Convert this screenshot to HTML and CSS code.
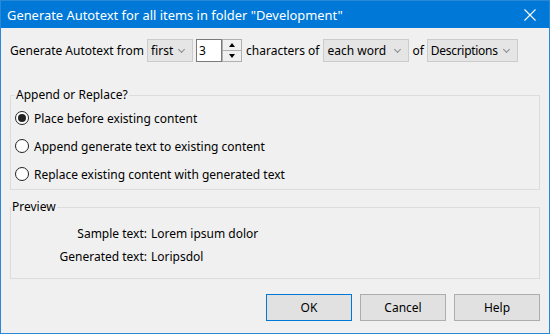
FILE: index.html
```html
<!DOCTYPE html>
<html lang="en">
<head>
    <meta charset="UTF-8">
    <title>Generate Autotext</title>
    <link rel="stylesheet" href="styles.css">
</head>
<body>
    <div class="window">
        <div class="titlebar">
            <span class="title">Generate Autotext for all items in folder "Development"</span>
            <svg class="close" width="12" height="12" viewBox="0 0 12 12">
                <path d="M0.5 0.5 L11.5 11.5 M11.5 0.5 L0.5 11.5" stroke="#fff" stroke-width="1.1" fill="none"/>
            </svg>
        </div>

        <div class="content">
            <div class="gen-row">
                <span class="lbl-from">Generate Autotext from</span>
                <div class="combo combo-first">first<span class="chev"></span></div>
                <div class="spin">
                    <div class="spin-input">3</div>
                    <div class="spin-btns">
                        <div class="spin-btn up"><span class="tri-up"></span></div>
                        <div class="spin-btn down"><span class="tri-down"></span></div>
                    </div>
                </div>
                <span class="lbl-chars">characters of</span>
                <div class="combo combo-word">each word<span class="chev"></span></div>
                <span class="lbl-of">of</span>
                <div class="combo combo-desc">Descriptions<span class="chev"></span></div>
            </div>

            <fieldset class="group group-mode">
                <legend>Append or Replace?</legend>
                <label class="radio-row"><span class="radio checked"></span>Place before existing content</label>
                <label class="radio-row"><span class="radio"></span>Append generate text to existing content</label>
                <label class="radio-row"><span class="radio"></span>Replace existing content with generated text</label>
            </fieldset>

            <fieldset class="group group-preview">
                <legend>Preview</legend>
                <div class="preview-grid">
                    <span class="pv-label">Sample text:</span>
                    <span class="pv-value">Lorem ipsum dolor</span>
                    <span class="pv-label">Generated text:</span>
                    <span class="pv-value">Loripsdol</span>
                </div>
            </fieldset>

            <div class="buttons">
                <button class="btn default">OK</button>
                <button class="btn">Cancel</button>
                <button class="btn">Help</button>
            </div>
        </div>
    </div>
</body>
</html>
```

FILE: styles.css
```css
body {
    margin: 0;
    font-family: "Noto Sans", "Open Sans", sans-serif;
    font-size: 12px;
    color: #000;
}
.window {
    width: 550px;
    height: 334px;
    box-sizing: border-box;
    border: 1px solid #2b88d8;
    background: #f0f0f0;
    display: flex;
    flex-direction: column;
}
.titlebar {
    height: 27px;
    background: #0078d7;
    color: #fff;
    display: flex;
    align-items: center;
    justify-content: space-between;
    padding: 0 13px 0 6px;
    flex-shrink: 0;
}
.title {
    font-size: 12.9px;
    white-space: nowrap;
}
.content {
    padding: 11px 9px 0 9px;
}
.gen-row {
    display: flex;
    align-items: center;
    height: 23px;
    white-space: nowrap;
}
.gen-row > * {
    flex-shrink: 0;
}
.lbl-from {
    margin-right: 3px;
}
.combo {
    position: relative;
    height: 23px;
    box-sizing: border-box;
    border: 1px solid #cccccc;
    background: #e5e5e5;
    padding: 0 0 0 3px;
    line-height: 21px;
}
.chev {
    position: absolute;
    right: 8px;
    top: 7px;
    width: 4px;
    height: 4px;
    border-right: 1px solid #8a8a8a;
    border-bottom: 1px solid #8a8a8a;
    transform: rotate(45deg);
}
.combo-first { width: 46px; }
.combo-word { width: 86px; }
.combo-desc {
    width: 91px;
    letter-spacing: -0.3px;
}
.spin {
    display: flex;
    margin-left: 3px;
    height: 23px;
}
.spin-input {
    width: 26px;
    box-sizing: border-box;
    border: 1px solid #7a7a7a;
    background: #fff;
    padding-left: 2px;
    line-height: 21px;
}
.spin-btns {
    display: flex;
    flex-direction: column;
    width: 20px;
}
.spin-btn {
    flex: 1;
    border: 1px solid #b0b0b0;
    background: #f0f0f0;
    display: flex;
    align-items: center;
    justify-content: center;
}
.spin-btn.down {
    border-top: none;
}
.tri-up {
    border-left: 3px solid transparent;
    border-right: 3px solid transparent;
    border-bottom: 4px solid #000;
}
.tri-down {
    border-left: 3px solid transparent;
    border-right: 3px solid transparent;
    border-top: 4px solid #000;
}
.lbl-chars {
    margin: 0 4px;
}
.lbl-of {
    margin: 0 3px;
}
.group {
    margin: 0;
    border: 1px solid #dcdcdc;
    padding: 0 0 1px 4px;
    min-width: 0;
}
.group legend {
    padding: 0 1px;
    line-height: 18px;
}
.group-mode {
    margin-top: 24px;
}
.radio-row {
    display: flex;
    align-items: center;
    height: 28px;
    white-space: nowrap;
}
.radio {
    width: 14px;
    height: 14px;
    box-sizing: border-box;
    border: 1px solid #222;
    border-radius: 50%;
    background: #fff;
    margin-right: 5px;
    display: flex;
    align-items: center;
    justify-content: center;
    flex-shrink: 0;
}
.radio.checked::after {
    content: "";
    width: 8px;
    height: 8px;
    border-radius: 50%;
    background: #222;
}
.group-preview {
    margin-top: 8px;
    padding: 6px 0 10px 0;
}
.preview-grid {
    display: grid;
    grid-template-columns: 136px auto;
    column-gap: 4px;
    justify-content: start;
}
.pv-label {
    text-align: right;
    line-height: 23px;
}
.pv-value {
    line-height: 23px;
}
.buttons {
    display: flex;
    justify-content: flex-end;
    gap: 8px;
    margin-top: 15px;
}
.btn {
    width: 86px;
    height: 27px;
    border: 1px solid #adadad;
    background: #e1e1e1;
    font-family: inherit;
    font-size: 12px;
    color: #000;
    padding: 0;
}
.btn.default {
    border: 1px solid #0078d7;
}
```
